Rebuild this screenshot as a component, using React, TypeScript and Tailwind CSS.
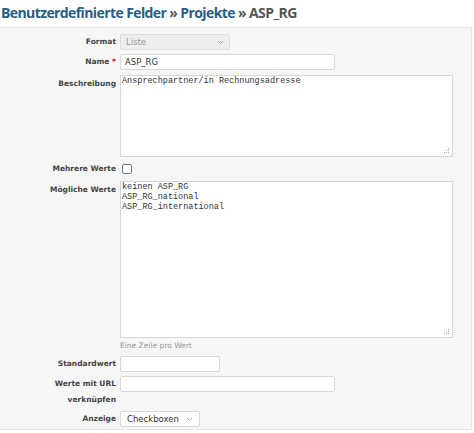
import React from 'react';

const labelCls =
  'w-[120px] shrink-0 pr-[4px] text-right font-bold text-[7.5px] leading-[16px] text-[#444]';
const inputCls =
  'h-[16px] border border-[#d7d7d7] bg-white rounded-[2px] px-[4px] text-[8.5px] leading-[14px] text-[#333]';

function Chevron() {
  return (
    <svg width="7" height="5" viewBox="0 0 7 5" className="ml-auto">
      <path d="M1 1 L3.5 3.5 L6 1" fill="none" stroke="#9a9a9a" strokeWidth="0.9" />
    </svg>
  );
}

function Grip() {
  return (
    <svg width="6" height="6" viewBox="0 0 6 6" className="absolute right-[2px] bottom-[2px]">
      <rect x="4" y="0" width="1" height="1" fill="#aaa" />
      <rect x="2" y="2" width="1" height="1" fill="#aaa" />
      <rect x="4" y="2" width="1" height="1" fill="#aaa" />
      <rect x="0" y="4" width="1" height="1" fill="#aaa" />
      <rect x="2" y="4" width="1" height="1" fill="#aaa" />
      <rect x="4" y="4" width="1" height="1" fill="#aaa" />
    </svg>
  );
}

export default function App() {
  return (
    <div className="w-[474px] h-[433px] bg-white overflow-hidden" style={{ fontFamily: '"DejaVu Sans", Verdana, sans-serif' }}>
      {/* Title */}
      <h2
        className="h-[27px] pl-[1px] pt-[4px] text-[14px] leading-[17px] font-bold text-[#444] tracking-[-0.6px]"
        style={{ fontFamily: '"Open Sans", "Liberation Sans", sans-serif' }}
      >
        <span className="text-[#2b5d84]">Benutzerdefinierte Felder</span>
        <span className="text-[#555]"> » </span>
        <span className="text-[#2b5d84]">Projekte</span>
        <span className="text-[#555]"> » ASP_RG</span>
      </h2>

      {/* Box */}
      <div className="w-[472px] h-[403px] bg-[#f6f6f6] border-t border-r border-b border-[#e6e6e6] pt-[6px]">
        <div className="flex items-center h-[16px]">
          <div className={labelCls}>Format</div>
          <div className="w-[110px] h-[16px] flex items-center border border-[#dedede] bg-[#eeeeee] rounded-[2px] px-[5px] text-[8.5px] text-[#9a9a9a]">
            Liste
            <Chevron />
          </div>
        </div>

        <div className="flex items-center h-[16px] mt-[4px]">
          <div className={labelCls}>
            Name <span className="text-[#bb0000]">*</span>
          </div>
          <div className={`${inputCls} w-[215px] border-[#a9c7dd]`}>ASP_RG</div>
        </div>

        <div className="flex mt-[5px]">
          <div className={`${labelCls} pt-[1px]`}>Beschreibung</div>
          <div
            className="relative w-[333px] h-[82px] border border-[#d7d7d7] bg-white px-[1px] text-[8.5px] leading-[10px] text-[#333]"
            style={{ fontFamily: '"Liberation Mono", "Courier New", monospace' }}
          >
            Ansprechpartner/in Rechnungsadresse
            <Grip />
          </div>
        </div>

        <div className="flex items-center h-[16px] mt-[4px]">
          <div className={labelCls}>Mehrere Werte</div>
          <div className="ml-[2px] w-[10px] h-[10px] border border-[#777] bg-white rounded-[2px]" />
        </div>

        <div className="flex mt-[4px]">
          <div className={`${labelCls} pt-[1px] leading-[10px]`}>Mögliche Werte</div>
          <div
            className="relative w-[333px] h-[157px] border border-[#d7d7d7] bg-white px-[1px] text-[8.5px] leading-[10px] text-[#333]"
            style={{ fontFamily: '"Liberation Mono", "Courier New", monospace' }}
          >
            <div>keinen ASP_RG</div>
            <div>ASP_RG_national</div>
            <div>ASP_RG_international</div>
            <Grip />
          </div>
        </div>

        <div className="pl-[120px] mt-[3px] text-[7.5px] leading-[10px] text-[#999]">Eine Zeile pro Wert</div>

        <div className="flex items-center h-[15px] mt-[5px]">
          <div className={labelCls}>Standardwert</div>
          <div className={`${inputCls} w-[100px] h-[15px]`} />
        </div>

        <div className="flex mt-[5px]">
          <div className={`${labelCls} leading-[15px]`}>
            Werte mit URL
            <br />
            verknüpfen
          </div>
          <div className={`${inputCls} w-[215px] h-[15px]`} />
        </div>

        <div className="flex items-center h-[16px] mt-[3px]">
          <div className={labelCls}>Anzeige</div>
          <div className="w-[80px] h-[16px] flex items-center border border-[#d7d7d7] bg-white rounded-[2px] px-[6px] text-[8.5px] text-[#333]">
            Checkboxen
            <Chevron />
          </div>
        </div>
      </div>
    </div>
  );
}
